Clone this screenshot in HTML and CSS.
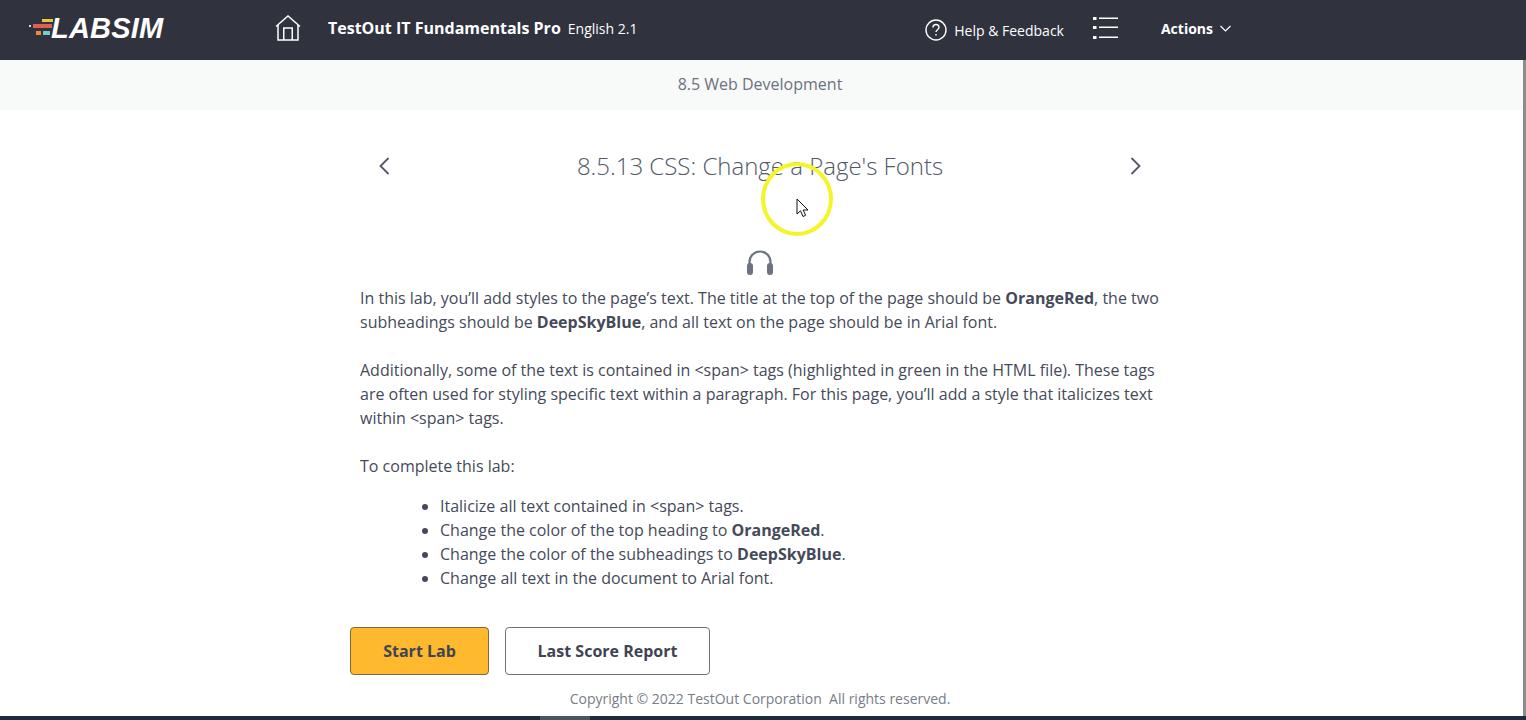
FILE: index.html
```html
<!DOCTYPE html>
<html lang="en">
<head>
    <meta charset="UTF-8">
    <meta name="viewport" content="width=device-width, initial-scale=1.0">
    <title>8.5.13 CSS: Change a Page's Fonts | LabSim</title>
    <link rel="stylesheet" href="styles.css">
</head>
<body>
    <div class="page">
        <header class="topbar">
            <div class="logo">
                <svg class="logo-bars" width="26" height="20" viewBox="0 0 26 20">
                    <rect x="14" y="1" width="11" height="3" fill="#f0c23c"/>
                    <rect x="1" y="7" width="2" height="2" fill="#d9d9d9"/>
                    <rect x="5" y="6" width="19" height="4" fill="#e0604f"/>
                    <rect x="8" y="13" width="5" height="4" fill="#f08a2e"/>
                    <rect x="15" y="13" width="7" height="4" fill="#6fd0c4"/>
                </svg>
                <span class="logo-text">LABSIM</span>
            </div>
            <a class="home-link">
                <svg width="26" height="26" viewBox="0 0 26 26" fill="none" stroke="#fff" stroke-width="1.5">
                    <path d="M1 11.500 13 1l12 10.500"/>
                    <path d="M3 10v15h20V10"/>
                    <path d="M8.750 25V13h8.500v12"/>
                </svg>
            </a>
            <span class="course-name">TestOut IT Fundamentals Pro</span>
            <span class="course-version">English 2.1</span>

            <div class="topbar-right">
                <a class="help-link">
                    <svg width="22" height="22" viewBox="0 0 22 22" fill="none" stroke="#fff" stroke-width="1.4">
                        <circle cx="11" cy="11" r="10"/>
                        <path d="M8 8.500c0-1.800 1.300-3 3-3s3 1.200 3 2.800c0 2.400-3 2.400-3 4.700"/>
                        <path d="M11 15v1.600"/>
                    </svg>
                    Help &amp; Feedback
                </a>
                <svg class="list-icon" width="25" height="24" viewBox="0 0 25 24" fill="#fff">
                    <rect x="0" y="1" width="3.500" height="3"/>
                    <rect x="6" y="1.500" width="19" height="1.500"/>
                    <rect x="0" y="10" width="3.500" height="3"/>
                    <rect x="6" y="10.500" width="19" height="1.500"/>
                    <rect x="0" y="20" width="3.500" height="3"/>
                    <rect x="6" y="20.500" width="19" height="1.500"/>
                </svg>
                <a class="actions-link">
                    Actions
                    <svg width="11" height="7" viewBox="0 0 11 7" fill="none" stroke="#fff" stroke-width="1.200">
                        <path d="M.5 1l5 5 5-5"/>
                    </svg>
                </a>
            </div>
        </header>

        <div class="section-bar">8.5 Web Development</div>

        <main class="lab">
            <div class="lab-title-row">
                <svg width="11" height="18" viewBox="0 0 11 18" fill="none" stroke="#50586a" stroke-width="1.800">
                    <path d="M9.500 1 1.500 9l8 8"/>
                </svg>
                <h1>8.5.13 CSS: Change a Page's Fonts</h1>
                <svg width="11" height="18" viewBox="0 0 11 18" fill="none" stroke="#50586a" stroke-width="1.800">
                    <path d="M1.500 1l8 8-8 8"/>
                </svg>
            </div>

            <div class="audio-icon">
                <svg width="28" height="26" viewBox="0 0 28 26" fill="none">
                    <path d="M3.500 15V12a10.500 10.500 0 0 1 21 0v3" stroke="#6c7280" stroke-width="2.200"/>
                    <rect x="1" y="13" width="6" height="12" rx="3" fill="#6c7280"/>
                    <rect x="21" y="13" width="6" height="12" rx="3" fill="#6c7280"/>
                </svg>
            </div>

            <div class="lab-text">
                <p>In this lab, you’ll add styles to the page’s text. The title at the top of the page should be <b>OrangeRed</b>, the two subheadings should be <b>DeepSkyBlue</b>, and all text on the page should be in Arial font.</p>
                <p>Additionally, some of the text is contained in &lt;span&gt; tags (highlighted in green in the HTML file). These tags are often used for styling specific text within a paragraph. For this page, you’ll add a style that italicizes text within &lt;span&gt; tags.</p>
                <p>To complete this lab:</p>
                <ul>
                    <li>Italicize all text contained in &lt;span&gt; tags.</li>
                    <li>Change the color of the top heading to <b>OrangeRed</b>.</li>
                    <li>Change the color of the subheadings to <b>DeepSkyBlue</b>.</li>
                    <li>Change all text in the document to Arial font.</li>
                </ul>
            </div>

            <div class="lab-buttons">
                <button class="btn btn-start">Start Lab</button>
                <button class="btn btn-report">Last Score Report</button>
            </div>

            <footer>Copyright © 2022 TestOut Corporation&nbsp; All rights reserved.</footer>
        </main>

        <div class="taskbar"><span class="taskbar-item"></span></div>
    </div>

    <!-- scrollbar thumb and the recording's cursor highlight sit over the page -->
    <div class="scroll-thumb"></div>
    <div class="cursor-ring"></div>
    <svg class="cursor-arrow" width="13" height="20" viewBox="0 0 13 20">
        <path d="M1 1v15l3.500-3.200L7 18.500l2.600-1.200-2.500-5.300H12z" fill="#fff" stroke="#111" stroke-width="1"/>
    </svg>
</body>
</html>
```

FILE: styles.css
```css
* {
    box-sizing: border-box;
}

body {
    font-family: 'Open Sans', sans-serif;
    margin: 0;
    height: 720px;
    overflow: hidden;
    background-color: #fff;
    color: #454a5a;
}

.page {
    display: flex;
    flex-direction: column;
    height: 720px;
}

.topbar {
    display: flex;
    align-items: center;
    height: 60px;
    flex-shrink: 0;
    padding: 0 295px 4px 28px;
    background-color: #30323e;
    color: #fff;
}

.logo {
    display: flex;
    align-items: center;
    width: 247px;
}

.logo-bars {
    margin-right: -3px;
}

.logo-text {
    font-family: 'Liberation Sans', sans-serif;
    font-size: 29px;
    font-weight: bold;
    font-style: italic;
    letter-spacing: 0.2px;
}

.home-link {
    display: flex;
    width: 53px;
}

.course-name {
    font-size: 16px;
    font-weight: 700;
}

.course-version {
    font-size: 14px;
    margin-left: 7px;
}

.topbar-right {
    display: flex;
    align-items: center;
    margin-left: auto;
}

.help-link {
    display: flex;
    align-items: center;
    gap: 7px;
    margin-top: 4px;
    font-size: 14px;
}

.list-icon {
    margin-left: 29px;
}

.actions-link {
    display: flex;
    align-items: center;
    gap: 7px;
    margin-left: 43px;
    font-size: 14px;
    font-weight: 700;
}

.section-bar {
    height: 50px;
    flex-shrink: 0;
    padding-right: 6px;
    line-height: 48px;
    text-align: center;
    font-size: 16px;
    color: #6c7280;
    background-color: #f8f9f9;
}

.lab {
    width: 820px;
    margin-left: 350px;
    flex-grow: 1;
}

.lab-title-row {
    display: flex;
    justify-content: space-between;
    align-items: center;
    height: 112px;
    padding: 0 29px;
}

h1 {
    margin: 0 0 2px;
    font-size: 24px;
    font-weight: 300;
    color: #50586a;
}

.audio-icon {
    display: flex;
    justify-content: center;
    height: 64px;
    padding-top: 28px;
}

.lab-text {
    padding: 0 10px;
    font-size: 16px;
    line-height: 24px;
}

.lab-text p {
    margin: 0 0 24px;
}

.lab-text p:last-of-type {
    margin-bottom: 16px;
}

.lab-text ul {
    margin: 0;
    padding-left: 80px;
}

b {
    font-weight: 700;
}

.lab-buttons {
    display: flex;
    gap: 16px;
    margin-top: 37px;
}

.btn {
    height: 48px;
    font-family: inherit;
    font-size: 16px;
    font-weight: 700;
    color: #3f4454;
    border-radius: 4px;
}

.btn-start {
    width: 139px;
    background-color: #ffb92e;
    border: 1px solid #7d6a3c;
}

.btn-report {
    width: 205px;
    background-color: #fff;
    border: 1px solid #6c7280;
}

footer {
    margin-top: 14px;
    text-align: center;
    font-size: 14px;
    line-height: 20px;
    color: #777c88;
}

.taskbar {
    height: 4px;
    flex-shrink: 0;
    background-color: #1d2b3a;
}

.taskbar-item {
    display: block;
    width: 50px;
    height: 4px;
    margin-left: 540px;
    background-color: #4a5562;
}

.scroll-thumb {
    position: absolute;
    top: 60px;
    left: 1523px;
    width: 3px;
    height: 656px;
    background-color: #8c8c8c;
}

.cursor-ring {
    position: absolute;
    top: 162px;
    left: 761px;
    width: 72px;
    height: 74px;
    border: 4px solid #f4f42a;
    border-radius: 50%;
}

.cursor-arrow {
    position: absolute;
    top: 198px;
    left: 796px;
}
```
